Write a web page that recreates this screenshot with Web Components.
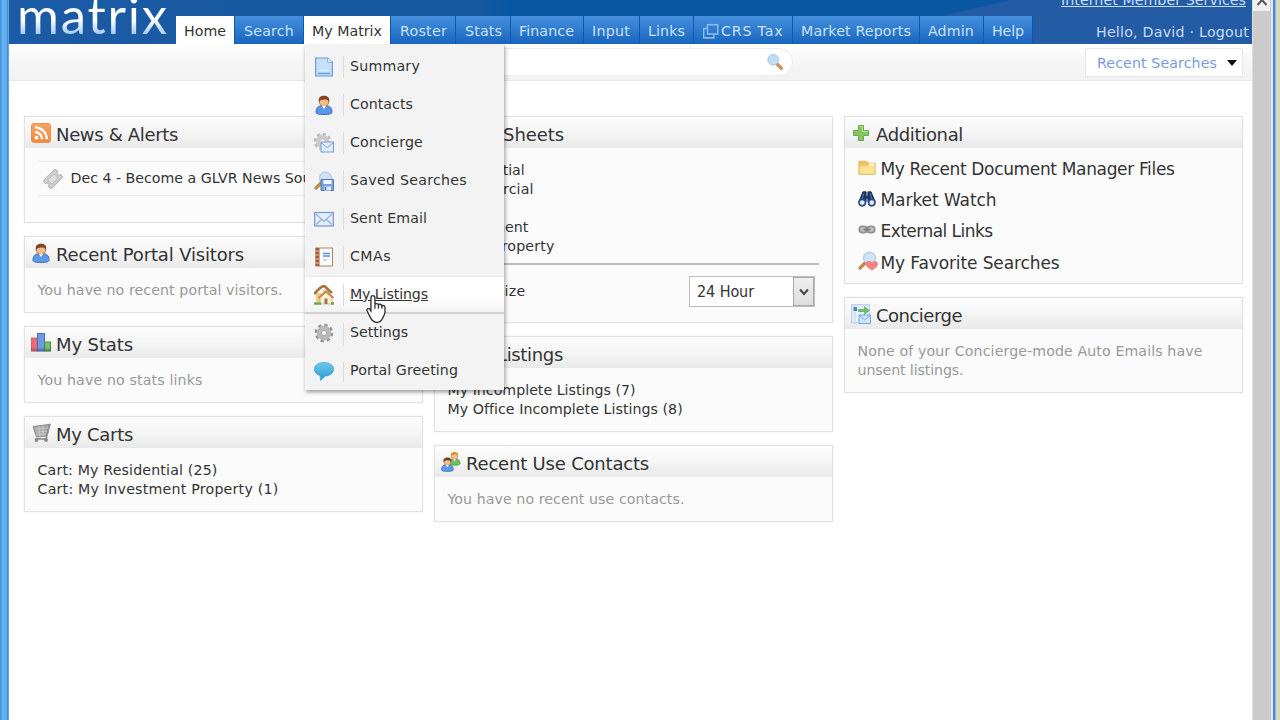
<!DOCTYPE html>
<html lang="en">
<head>
<meta charset="utf-8">
<title>Matrix</title>
<style>
  html, body { margin: 0; height: 100%; overflow: hidden; }
  body { font: 14.2px/19px "DejaVu Sans", Verdana, sans-serif; color: #333; background: #fff; }
</style>
</head>
<body>
<app-window></app-window>

<script>
const FONT = '"DejaVu Sans", Verdana, sans-serif';
const ctx = document.createElement('canvas').getContext('2d');

// one line of text, spaced out to fill a given width
class FitText extends HTMLElement {
  connectedCallback() {
    const size = this.getAttribute('size') || 14.2;
    const family = this.getAttribute('family') || FONT;
    const weight = this.getAttribute('weight') || 400;
    const text = this.textContent;
    const w = Number(this.getAttribute('w'));
    ctx.font = `${weight} ${size}px ${family}`;
    const gap = w ? (w - ctx.measureText(text).width) / text.length : 0;

    this.attachShadow({mode: 'open'}).innerHTML = `
      <style>
        :host {
          display: inline-block;
          white-space: nowrap;
          font: ${weight} ${size}px ${family};
          line-height: inherit;
          letter-spacing: ${gap.toFixed(3)}px;
        }
      </style><slot></slot>`;
  }
}

const person = (hair, shirt, edge) => `
  <path d="M2 17c0-5 3-6.500 8-6.500s8 1.500 8 6.500c0 2-3 2.500-8 2.500s-8-.5-8-2.500z" fill="${shirt}" stroke="${edge}"/>
  <circle cx="10" cy="7" r="4.600" fill="#f3bd8c" stroke="#9a6038" stroke-width=".7"/>
  <path d="M4.800 7C4 2 7 .7 10 .7S16 2 15.200 7c-1-2.500-3-2.600-5.200-2.600S6 5 4.800 7z" fill="${hair}"/>
  <path d="M8 11l2 3 2-3z" fill="#fff"/>`;

const gear = (fill, edge) => `
  <circle cx="10" cy="10" r="7.800" fill="none" stroke="${edge}" stroke-width="3" stroke-dasharray="3.300 2.826"/>
  <circle cx="10" cy="10" r="5" fill="none" stroke="${fill}" stroke-width="4.500"/>
  <circle cx="10" cy="10" r="2.700" fill="#f3f3f3" stroke="${edge}" stroke-width=".8"/>`;

const glass = `
  <path d="M8 11l-6 6" stroke="#b98a52" stroke-width="3.200" stroke-linecap="round"/>
  <circle cx="11.500" cy="7" r="6" fill="#cfe2f7" stroke="#a9c3e0"/>`;

const ICONS = {
  rss: `
    <defs><linearGradient id="g" x2="0" y2="1"><stop stop-color="#f9a45c"/><stop offset="1" stop-color="#f08a3c"/></linearGradient></defs>
    <rect x=".5" y=".5" width="19" height="19" rx="2.500" fill="url(#g)" stroke="#e99150"/>
    <circle cx="5.500" cy="14.700" r="1.900" fill="#fff"/>
    <path d="M4 9a7 7 0 0 1 7 7.300M4 4.500A11.500 11.500 0 0 1 15.700 16.300" fill="none" stroke="#fff" stroke-width="2.300"/>`,
  ticket: `
    <g transform="rotate(-45 10 10)">
      <path d="M1.500 4.500h17v3.500a2 2 0 0 0 0 4v3.500h-17V12a2 2 0 0 0 0-4z" fill="#d3d3d3" stroke="#b5b5b5"/>
      <rect x="5.500" y="7" width="9" height="6" fill="#e0e0e0" stroke="#bcbcbc"/>
    </g>`,
  user: person('#84421f', '#5b9ae8', '#3e6db5'),
  users: `
    <g transform="translate(6.500 -.5) scale(.7)">${person('#d9912f', '#6fbf62', '#479a45')}</g>
    <g transform="translate(-1 5) scale(.74)">${person('#6e3d22', '#5b9ae8', '#3e6db5')}</g>`,
  stats: `
    <rect x=".5" y="5" width="6" height="13" fill="#ec6a70" stroke="#d8606a"/>
    <rect x="6.500" y=".5" width="7" height="17.500" fill="#6b9be2" stroke="#4a70ba"/>
    <rect x="13.500" y="9" width="6" height="9" fill="#79bd6c" stroke="#4b8d48"/>
    <path d="M0 17h20" stroke="#333a66" stroke-opacity=".3" stroke-width="3"/>`,
  cart: `
    <path d="M2 3.500L18 1.500 15.500 13l-10 1z" fill="#a9a9a9" stroke="#8c8c8c"/>
    <path d="M4 6l13-1M5 9l11.500-.7M5.500 11.600l10.500-.7M8 3l1 10.500M12 2.500V13" stroke="#cfcfcf" stroke-width=".8"/>
    <path d="M19 .8L15.500 13.500v2.300H4.500" fill="none" stroke="#8f8f8f" stroke-width="1.800"/>
    <circle cx="5.500" cy="17" r="1.900" fill="#8c8c8c"/><circle cx="15" cy="17" r="1.900" fill="#8c8c8c"/>`,
  plus: `<path d="M7.500 2.500h5v5h5v5h-5v5h-5v-5h-5v-5h5z" fill="#86c562" stroke="#6aa94d"/>
    <path d="M8.500 3.500h3v5h5" fill="none" stroke="#b9e39b"/>`,
  folder: `
    <path d="M1 2.500h8l2 2h8V17H1z" fill="#f0c765" stroke="#dcb050"/>
    <path d="M2 8h9l2-2h5.500v10.500H2z" fill="#fbe298"/>
    <path d="M12 4.500h6v3h-6z" fill="#fff3c6"/>`,
  binoculars: `
    <path d="M5.500 2h3.500v5h2V2h3.500L19 13H11V9H9v4H1z" fill="#1f3868" stroke="#152952"/>
    <circle cx="4.700" cy="14" r="3.600" fill="#e2e9f5" stroke="#27488a" stroke-width="1.800"/>
    <circle cx="15.300" cy="14" r="3.600" fill="#e2e9f5" stroke="#27488a" stroke-width="1.800"/>
    <path d="M6.500 4l-2 6M13.500 4l2 6" stroke="#5d80bd"/>`,
  link: `
    <rect x="1.500" y="6" width="8.500" height="7" rx="3.500" fill="#c4c4c4" stroke="#8f8f8f" stroke-width="2"/>
    <rect x="10" y="6" width="8.500" height="7" rx="3.500" fill="#c4c4c4" stroke="#8f8f8f" stroke-width="2"/>
    <path d="M6 9.500h8" stroke="#777" stroke-width="2"/>`,
  favorite: `${glass}
    <path d="M14 19.500c-4-2.500-6.500-4-6.500-6.500 0-3 4.500-4 6.500-1.400 2-2.600 6-1.600 6 1.400 0 2.500-2 4-6 6.500z" fill="#f28484"/>`,
  concierge: `
    <rect x=".8" y=".8" width="17.500" height="18" fill="#e6f0fb" stroke="#aac8e8"/>
    <path d="M4 1v18" stroke="#c5d8ee"/><rect x="2.500" y="3" width="3.500" height="4" fill="#5780b8"/>
    <path d="M7 8V5h6V2l6 4.500-6 4.500V8z" fill="#6cbc72"/>
    <path d="M8 11h11.500v8.500H8z" fill="#cfe5fb" stroke="#75a8dc"/><path d="M8 11l5.700 5 5.800-5" fill="none" stroke="#75a8dc"/>`,
  page: `
    <path d="M1.700 1h12L18.300 5v14H1.700z" fill="#c5e0f8" stroke="#6b9bcd" stroke-width="1.200"/>
    <path d="M13.700 1v4.300h4.600" fill="#fff" stroke="#84acd6"/>
    <path d="M4 16.500h12" stroke="#5ba3e4" stroke-width="1.500"/><path d="M4 13.500h12" stroke="#e5f3fd"/>`,
  gearmail: `<g opacity=".75" transform="translate(-1 -1) scale(.95)">${gear('#bdbdbd', '#a8a8a8')}</g>
    <rect x="7" y="9" width="12.500" height="10" fill="#e1ecfb" stroke="#7d9dcf"/>
    <path d="M7 9.500l6.300 5 6.200-5" fill="none" stroke="#7d9dcf"/>`,
  saved: `${glass}
    <path d="M7 8.500h12.500v11H7z" fill="#7ba4dd" stroke="#5579b8"/>
    <path d="M9.500 9h8v4h-8z" fill="#f4f8fd"/><path d="M10 15.500h7v4h-7z" fill="#dfe9f7"/><path d="M11.500 16v3" stroke="#55719c" stroke-width="1.500"/>`,
  mail: `
    <rect x=".7" y="3.500" width="18.600" height="13.500" fill="#e3edfb" stroke="#7695cc" stroke-width="1.200"/>
    <path d="M2 5l8 7.500L18 5M2 15.500l5.500-5M18 15.500l-5.500-5" fill="none" stroke="#91acda" stroke-width="1.100"/>`,
  book: `
    <rect x="2" y="1" width="16.500" height="18" fill="#fbfbfb" stroke="#a9866d"/>
    <rect x="1.500" y="1" width="4" height="18" fill="#a35f3c"/>
    <path d="M1 4h4M1 8h4M1 12h4M1 16h4" stroke="#e0c0a8"/>
    <path d="M9 6.500h7M9 9h7" stroke="#5b8edb" stroke-width="1.600"/><path d="M9 13h4" stroke="#bbb"/>`,
  houses: `
    <path d="M2 8h7v9H2zM9 5h7v8H9z" fill="#f0c986"/>
    <path d="M0 9l6-6 4-2.300 8 7.300" fill="none" stroke="#a8763c" stroke-width="2.700"/>
    <path d="M6 12.500l6-5 6 5V19H6z" fill="#fdf0d2" stroke="#c6a26c" stroke-width=".7"/>
    <path d="M4.500 13L12 6.500l7.500 6.500" fill="none" stroke="#bf8d4c" stroke-width="2"/>
    <path d="M10.500 13.500h3V19h-3z" fill="#9c7554"/><path d="M0 18.500h7M17 18.500h3" stroke="#68a553" stroke-width="2.600"/>`,
  gear: gear('#b9b9b9', '#949494'),
  bubble: `
    <defs><linearGradient id="g" x2="0" y2="1"><stop stop-color="#6cc9ee"/><stop offset="1" stop-color="#2a9bd0"/></linearGradient></defs>
    <path d="M10 1.500c5.500 0 9.700 2.800 9.700 6.700S15.500 15 11.500 15L6.500 19.500l-.3-5C2.500 13.500.3 11.200.3 8.200.3 4.300 4.500 1.500 10 1.500z" fill="url(#g)" stroke="#3b9fce" stroke-width=".7"/>`,
  search: `
    <path d="M12 12l5 5" stroke="#c59765" stroke-width="4" stroke-linecap="round"/>
    <circle cx="8" cy="7.500" r="6" fill="#c3dcf5" stroke="#a4c3e4"/>`,
  windows: `
    <rect x="6.500" y="2" width="12" height="11" fill="none" stroke="#8dbaee" stroke-width="1.800"/>
    <path d="M6 6.500H2v11h12V13" fill="none" stroke="#8dbaee" stroke-width="1.800"/>`,
  hand: `
    <path d="M6.500 1.500c1.600 0 2 1 2 2.200V10c.3-1.300 3.200-1.200 3.400.5.600-1.300 3-.9 3.200.9.900-1 3-.4 3 1.600v4c0 2-1 3.500-2 5.500-.8 1.600-1.500 4.500-5.600 4.500-4 0-5.500-2.500-6.500-5L1 16c-.7-2 1.700-3 3-1l.7 1V3.700c0-1.200.4-2.200 1.800-2.200z" fill="#fff" stroke="#333" stroke-width="1.300"/>
    <path d="M8.500 10v4M11.900 10.500V14M15.100 11.500V14" stroke="#333" stroke-width="1.200"/>`,
};

class UiIcon extends HTMLElement {
  connectedCallback() {
    const name = this.getAttribute('name');
    const w = this.getAttribute('size') || 20;
    const h = name === 'hand' ? w * 1.4 : w;
    this.attachShadow({mode: 'open'}).innerHTML = `
      <style>
        :host { display: block; flex: none; width: ${w}px; height: ${h}px; }
        svg { display: block; }
      </style>
      <svg width="${w}" height="${h}" viewBox="0 0 20 ${name === 'hand' ? 28 : 20}">${ICONS[name]}</svg>`;
  }
}

class NavTab extends HTMLElement {
  connectedCallback() {
    this.attachShadow({mode: 'open'}).innerHTML = `
      <style>
        :host {
          position: relative;
          display: flex;
          align-items: center;
          box-sizing: border-box;
          width: ${this.getAttribute('width')}px;
          height: 28px;
          padding: 3px 0 0 8px;
          border-right: 1px solid #0d58aa;
          background: linear-gradient(#4590dc, #2e7ace 50%, #1765bd);
          color: #cbe1fa;
        }
        :host([active]) { background: #fff; color: #333; }
      </style>
      <slot></slot><slot name="menu"></slot>`;
  }
}

class MenuList extends HTMLElement {
  connectedCallback() {
    this.attachShadow({mode: 'open'}).innerHTML = `
      <style>
        :host {
          position: absolute;
          z-index: 5;
          top: 100%;
          left: 1px;
          display: flex;
          flex-direction: column;
          width: 199px;
          padding: 3px 0 0;
          background: #f3f3f3;
          box-shadow: 1px 2px 4px rgba(0, 0, 0, .4);
          color: #333;
          clip-path: inset(0 -8px -8px -8px);
        }
      </style>
      <slot></slot>`;
  }
}

class MenuItem extends HTMLElement {
  connectedCallback() {
    this.attachShadow({mode: 'open'}).innerHTML = `
      <style>
        :host { display: flex; align-items: center; box-sizing: border-box; height: 38.1px; padding-left: 9px; }
        :host([hover]) {
          background: linear-gradient(#fff, #fff 55%, #f2f2f2);
          border-top: 1px solid #e8e8e8;
          border-bottom: 2px solid #d2d2d2;
        }
        i { width: 1px; height: 22px; margin: 2px 6px 0 9px; background: #dcdcdc; }
        ui-icon { margin-top: 1px; }
      </style>
      <ui-icon name="${this.getAttribute('icon')}"></ui-icon><i></i>
      <slot></slot>`;
  }
}

class InfoPanel extends HTMLElement {
  connectedCallback() {
    const icon = this.getAttribute('icon');
    this.attachShadow({mode: 'open'}).innerHTML = `
      <style>
        :host {
          display: block;
          box-sizing: border-box;
          height: ${this.getAttribute('height')}px;
          border: 1px solid #e2e2e2;
          box-shadow: 0 0 2px #eee;
          background: #fbfbfb;
        }
        header {
          display: flex;
          align-items: center;
          gap: 5px;
          box-sizing: border-box;
          height: 31px;
          padding: 4px 0 0 6px;
          background: linear-gradient(#fcfcfc, #f5f5f5 50%, #e9e9e9);
          color: #333;
        }
        header ui-icon { margin-top: -3px; }
        .body { padding: 13px 12.500px 0; }
        :host([muted]) .body { color: #999; }
      </style>
      <header><ui-icon name="${icon}"></ui-icon>
        <fit-text size="18" w="${this.getAttribute('title-width')}">${this.getAttribute('heading').replace('&', '&amp;')}</fit-text>
      </header>
      <div class="body"><slot></slot></div>`;
  }
}

class LinkRow extends HTMLElement {
  connectedCallback() {
    this.attachShadow({mode: 'open'}).innerHTML = `
      <style>
        :host { display: flex; align-items: center; height: 19px; }
        :host([big]) { height: 31.2px; gap: 5px; }
        :host([news]) {
          box-sizing: border-box; height: 35px; gap: 8px; padding-left: 5px;
          border: solid #ebebeb; border-width: 1px 0;
        }
      </style>
      <slot></slot>`;
  }
}

class SelectBox extends HTMLElement {
  connectedCallback() {
    this.attachShadow({mode: 'open'}).innerHTML = `
      <style>
        :host {
          display: flex; align-items: center; justify-content: space-between;
          box-sizing: border-box; width: 126px; height: 31px; padding-left: 7px;
          border: 1px solid #bdbdbd; background: #fff; color: #333;
        }
        .btn {
          display: flex; align-items: center; justify-content: center;
          box-sizing: border-box; width: 21px; height: 100%;
          border: 1px solid #aaa; background: linear-gradient(#efefef, #dedede);
        }
      </style>
      <slot></slot>
      <span class="btn"><svg width="10" height="8" viewBox="0 0 10 8"><path d="M1 1.500l4 4.500 4-4.500" fill="none" stroke="#444" stroke-width="2"/></svg></span>`;
  }
}

class PageHeader extends HTMLElement {
  connectedCallback() {
    this.attachShadow({mode: 'open'}).innerHTML = `
      <style>
        :host {
          position: relative;
          z-index: 2;
          display: flex;
          align-items: flex-end;
          height: 44px;
          background:
            linear-gradient(to bottom right, transparent 50%, #235ba5 51%) 808px 0 / 193px 44px no-repeat,
            linear-gradient(#235ba5, #235ba5) 1001px 0 / 242px 44px no-repeat,
            linear-gradient(90deg, #1b5ba5, #15599f 38%, #0957a2 40%);
          color: #c8dcf5;
        }
        .logo { box-sizing: border-box; width: 167px; height: 44px; padding-left: 8px; line-height: 30px; }
        .logo fit-text {
          padding-bottom: 14px;
          background: linear-gradient(#fff 45%, #9fc8f2 80%);
          -webkit-background-clip: text;
          background-clip: text;
          color: transparent;
        }
        .user {
          display: flex; flex-direction: column; align-items: flex-end; justify-content: space-between;
          height: 51px; margin: -10px 3px 2px auto;
        }
        .top { margin-right: 3px; }
        .top fit-text { text-decoration: underline; }
      </style>
      <div class="logo"><fit-text size="51" family="Lato, sans-serif" w="152">matrix</fit-text></div>
      <nav-tab width="59" active><fit-text w="42">Home</fit-text></nav-tab>
      <nav-tab width="69"><fit-text w="50" style="margin-left:1px">Search</fit-text></nav-tab>
      <nav-tab width="87" active><fit-text w="70">My Matrix</fit-text>
        <menu-list slot="menu">
          <menu-item icon="page"><fit-text w="70">Summary</fit-text></menu-item>
          <menu-item icon="user"><fit-text w="63">Contacts</fit-text></menu-item>
          <menu-item icon="gearmail"><fit-text w="73">Concierge</fit-text></menu-item>
          <menu-item icon="saved"><fit-text w="117">Saved Searches</fit-text></menu-item>
          <menu-item icon="mail"><fit-text w="77">Sent Email</fit-text></menu-item>
          <menu-item icon="book"><fit-text w="41">CMAs</fit-text></menu-item>
          <menu-item icon="houses" hover><fit-text w="78" style="text-decoration:underline">My Listings</fit-text></menu-item>
          <menu-item icon="gear"><fit-text w="58">Settings</fit-text></menu-item>
          <menu-item icon="bubble"><fit-text w="108">Portal Greeting</fit-text></menu-item>
        </menu-list>
      </nav-tab>
      <nav-tab width="65"><fit-text w="47" style="margin-left:1px">Roster</fit-text></nav-tab>
      <nav-tab width="55"><fit-text w="37" style="margin-left:1px">Stats</fit-text></nav-tab>
      <nav-tab width="73"><fit-text w="55">Finance</fit-text></nav-tab>
      <nav-tab width="56"><fit-text w="38">Input</fit-text></nav-tab>
      <nav-tab width="54"><fit-text w="37">Links</fit-text></nav-tab>
      <nav-tab width="99"><ui-icon name="windows" size="17"></ui-icon><fit-text w="62.500" style="margin-left:2px">CRS Tax</fit-text></nav-tab>
      <nav-tab width="127"><fit-text w="110">Market Reports</fit-text></nav-tab>
      <nav-tab width="64"><fit-text w="46">Admin</fit-text></nav-tab>
      <nav-tab width="49"><fit-text w="32">Help</fit-text></nav-tab>
      <div class="user">
        <span class="top"><fit-text w="185">Internet Member Services</fit-text></span>
        <fit-text w="153">Hello, David · Logout</fit-text>
      </div>`;
  }
}

class SearchBar extends HTMLElement {
  connectedCallback() {
    this.attachShadow({mode: 'open'}).innerHTML = `
      <style>
        :host {
          display: flex; justify-content: space-between; align-items: center;
          box-sizing: border-box; height: 37px; padding: 0 9px 0 361px;
          border-bottom: 1px solid #e6e6e6;
          background: linear-gradient(#fff, #f8f7f7 40%, #f2f2f2);
        }
        .field {
          display: flex; align-items: center; justify-content: flex-end;
          box-sizing: border-box; width: 423px; height: 28px; padding-right: 8px;
          border: 1px solid #eee; border-radius: 14px; background: #fff;
        }
        .recent {
          display: flex; align-items: center; justify-content: space-between;
          box-sizing: border-box; width: 158px; height: 29px; padding: 2px 5px 0 11px;
          border: 1px solid #e8e8e8; background: #fff; color: #7c9bdc;
        }
      </style>
      <div class="field"><ui-icon name="search" size="18"></ui-icon></div>
      <div class="recent"><fit-text w="120">Recent Searches</fit-text>
        <svg width="10" height="6" viewBox="0 0 10 6"><path d="M0 0h10L5 6z" fill="#111"/></svg>
      </div>`;
  }
}

class DashBoard extends HTMLElement {
  connectedCallback() {
    this.attachShadow({mode: 'open'}).innerHTML = `
      <style>
        :host { display: grid; grid-template-columns: repeat(3, 398.500px); gap: 11.500px; align-items: start; padding: 35px 0 0 15px; }
        .col { display: flex; flex-direction: column; gap: 13px; }
        hr { height: 2px; margin: 7px 0 11px; border: 0; background: #bbb; }
        .size { display: flex; align-items: center; justify-content: space-between; padding-right: 4px; }
        .extra { margin-top: -7px; }
        .extra ui-icon { margin-top: -4px; }
      </style>
      <div class="col">
        <info-panel icon="rss" heading="News & Alerts" title-width="122" height="107">
          <link-row news><ui-icon name="ticket"></ui-icon><fit-text w="263">Dec 4 - Become a GLVR News Source</fit-text></link-row>
        </info-panel>
        <info-panel icon="user" heading="Recent Portal Visitors" title-width="188" height="77" muted>
          <link-row><fit-text w="245">You have no recent portal visitors.</fit-text></link-row>
        </info-panel>
        <info-panel icon="stats" heading="My Stats" title-width="77" height="77" muted>
          <link-row><fit-text w="165">You have no stats links</fit-text></link-row>
        </info-panel>
        <info-panel icon="cart" heading="My Carts" title-width="77" height="96">
          <link-row><fit-text w="180">Cart: My Residential (25)</fit-text></link-row>
          <link-row><fit-text w="241">Cart: My Investment Property (1)</fit-text></link-row>
        </info-panel>
      </div>
      <div class="col">
        <info-panel icon="page" heading="Hot Sheets" title-width="98" height="207">
          <link-row><fit-text w="77">Residential</fit-text></link-row>
          <link-row><fit-text w="86">Commercial</fit-text></link-row>
          <link-row></link-row>
          <link-row><fit-text w="81">Investment</fit-text></link-row>
          <link-row><fit-text w="107">Other Property</fit-text></link-row>
          <hr>
          <div class="size"><fit-text w="78">Sheet Size</fit-text>
            <select-box><fit-text size="16" family='"DejaVu Sans Condensed", "DejaVu Sans", sans-serif' w="57">24 Hour</fit-text></select-box>
          </div>
        </info-panel>
        <info-panel icon="houses" heading="My Listings" title-width="97" height="96">
          <link-row><fit-text w="188">My Incomplete Listings (7)</fit-text></link-row>
          <link-row><fit-text w="235">My Office Incomplete Listings (8)</fit-text></link-row>
        </info-panel>
        <info-panel icon="users" heading="Recent Use Contacts" title-width="183" height="77" muted>
          <link-row><fit-text w="237">You have no recent use contacts.</fit-text></link-row>
        </info-panel>
      </div>
      <div class="col">
        <info-panel icon="plus" heading="Additional" title-width="87" height="168">
          <div class="extra">
            <link-row big><ui-icon name="folder" size="18"></ui-icon><fit-text size="17" w="294">My Recent Document Manager Files</fit-text></link-row>
            <link-row big><ui-icon name="binoculars" size="18"></ui-icon><fit-text size="17" w="116">Market Watch</fit-text></link-row>
            <link-row big><ui-icon name="link" size="18"></ui-icon><fit-text size="17" w="112">External Links</fit-text></link-row>
            <link-row big><ui-icon name="favorite" size="20" style="margin-right:-2px"></ui-icon><fit-text size="17" w="179">My Favorite Searches</fit-text></link-row>
          </div>
        </info-panel>
        <info-panel icon="concierge" heading="Concierge" title-width="86" height="96" muted>
          <link-row><fit-text w="345">None of your Concierge-mode Auto Emails have</fit-text></link-row>
          <link-row><fit-text w="106">unsent listings.</fit-text></link-row>
        </info-panel>
      </div>`;
  }
}

class AppWindow extends HTMLElement {
  connectedCallback() {
    this.attachShadow({mode: 'open'}).innerHTML = `
      <style>
        :host { position: relative; display: flex; height: 720px; overflow: hidden; }
        .left { width: 9px; background: linear-gradient(90deg, #4a94d2 1px, #62b1f8 2px, #60aff6 6px, #4189c6 8px, #8dbde3); }
        main { width: 1243px; }
        .scroll { box-sizing: border-box; width: 18px; border-left: 1px solid #dedede; background: #cbcbcb; }
        .up { display: flex; justify-content: center; height: 11px; background: #f0f0f0; }
        .right { width: 10px; background: linear-gradient(90deg, #cdc6ce 0 1px, #e3e8fb 1px 3px, #5484cb 3px 5px, #8fc3e2 5px 6px, #b4dbe6 6px 7px, #d5dccb 7px 8px, #e4d9a4 8px); }
        .cursor { position: absolute; z-index: 9; left: 366px; top: 294px; }
      </style>
      <div class="left"></div>
      <main>
        <page-header></page-header>
        <search-bar></search-bar>
        <dash-board></dash-board>
      </main>
      <div class="scroll"><div class="up"><svg width="12" height="8" viewBox="0 0 12 8"><path d="M1.500 5L6 0l4.500 5" fill="none" stroke="#555" stroke-width="2"/></svg></div></div>
      <div class="right"></div>
      <ui-icon class="cursor" name="hand" size="21"></ui-icon>`;
  }
}

customElements.define('fit-text', FitText);
customElements.define('ui-icon', UiIcon);
customElements.define('nav-tab', NavTab);
customElements.define('menu-list', MenuList);
customElements.define('menu-item', MenuItem);
customElements.define('info-panel', InfoPanel);
customElements.define('link-row', LinkRow);
customElements.define('select-box', SelectBox);
customElements.define('page-header', PageHeader);
customElements.define('search-bar', SearchBar);
customElements.define('dash-board', DashBoard);
customElements.define('app-window', AppWindow);
</script>
</body>
</html>
